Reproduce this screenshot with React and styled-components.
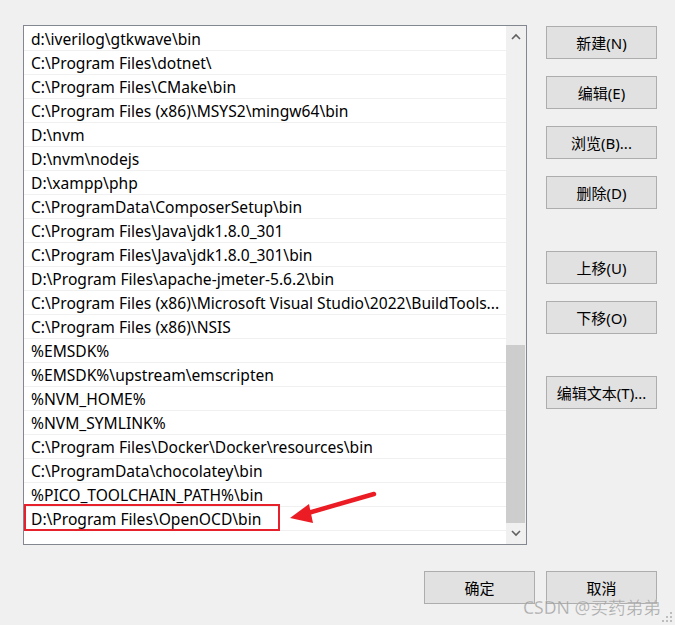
import React from "react";
import styled, { createGlobalStyle } from "styled-components";

const GlobalStyle = createGlobalStyle`
  html, body { margin: 0; padding: 0; background: #f0f0f0; }
  body { font-family: "Noto Sans", "Noto Sans CJK SC", sans-serif; color: #000; }
`;

const Window = styled.div`
  position: relative;
  width: 675px;
  height: 625px;
  box-sizing: border-box;
  padding: 25px 18px 0 23px;
  background: #f0f0f0;
  overflow: hidden;
`;

const Top = styled.div`
  display: flex;
  gap: 19px;
  align-items: flex-start;
`;

const ListBox = styled.div`
  width: 504px;
  height: 520px;
  box-sizing: border-box;
  border: 1px solid #828790;
  background: #fff;
  display: flex;
`;

const Rows = styled.div`
  flex: 1;
  padding-top: 1px;
  min-width: 0;
`;

const Row = styled.div`
  height: 24px;
  box-sizing: border-box;
  border-bottom: 1px solid #f0f0f0;
  padding-left: 7px;
  font-family: "Noto Sans", "Noto Sans CJK SC", sans-serif;
  font-size: 15.6px;
  line-height: 24px;
  white-space: nowrap;
  overflow: hidden;
`;

const ScrollBar = styled.div`
  width: 20px;
  background: #f0f0f0;
  display: flex;
  flex-direction: column;
`;

const ArrowBox = styled.div`
  height: 21px;
  display: flex;
  align-items: center;
  justify-content: center;
`;

const Track = styled.div`
  flex: 1;
  display: flex;
  flex-direction: column;
  justify-content: flex-end;
`;

const Thumb = styled.div`
  height: 178px;
  margin-right: 1px;
  background: #cdcdcd;
`;

const ButtonCol = styled.div`
  display: flex;
  flex-direction: column;
  width: 111px;
  padding-top: 1px;
`;

const Btn = styled.div`
  width: 111px;
  height: 33px;
  box-sizing: border-box;
  border: 1px solid #adadad;
  background: #e1e1e1;
  display: flex;
  align-items: center;
  justify-content: center;
  font-family: "Noto Sans", "Noto Sans CJK SC", sans-serif;
  font-size: 15px;
  margin-top: ${(p) => p.$gap || 0}px;
`;

const Bottom = styled.div`
  display: flex;
  justify-content: flex-end;
  gap: 11px;
  margin-top: 26px;
`;

const Highlight = styled.div`
  position: absolute;
  left: 24px;
  top: 504px;
  width: 256px;
  height: 27px;
  box-sizing: border-box;
  border: 2px solid #e6212b;
`;

const ArrowSvg = styled.svg`
  position: absolute;
  left: 280px;
  top: 480px;
`;

const Watermark = styled.div`
  position: absolute;
  left: 523px;
  top: 594px;
  font-family: "Noto Sans", "Noto Sans CJK SC", sans-serif;
  font-size: 17.6px;
  color: rgba(140, 140, 140, 0.7);
  -webkit-text-stroke: 0.3px rgba(255,255,255,0.6);
  white-space: nowrap;
`;

const Grip = styled.svg`
  position: absolute;
  right: 2px;
  bottom: 2px;
`;

const paths = [
  "d:\\iverilog\\gtkwave\\bin",
  "C:\\Program Files\\dotnet\\",
  "C:\\Program Files\\CMake\\bin",
  "C:\\Program Files (x86)\\MSYS2\\mingw64\\bin",
  "D:\\nvm",
  "D:\\nvm\\nodejs",
  "D:\\xampp\\php",
  "C:\\ProgramData\\ComposerSetup\\bin",
  "C:\\Program Files\\Java\\jdk1.8.0_301",
  "C:\\Program Files\\Java\\jdk1.8.0_301\\bin",
  "D:\\Program Files\\apache-jmeter-5.6.2\\bin",
  "C:\\Program Files (x86)\\Microsoft Visual Studio\\2022\\BuildTools...",
  "C:\\Program Files (x86)\\NSIS",
  "%EMSDK%",
  "%EMSDK%\\upstream\\emscripten",
  "%NVM_HOME%",
  "%NVM_SYMLINK%",
  "C:\\Program Files\\Docker\\Docker\\resources\\bin",
  "C:\\ProgramData\\chocolatey\\bin",
  "%PICO_TOOLCHAIN_PATH%\\bin",
  "D:\\Program Files\\OpenOCD\\bin",
];

const sideButtons = [
  { label: "新建(N)", gap: 0 },
  { label: "编辑(E)", gap: 17 },
  { label: "浏览(B)...", gap: 17 },
  { label: "删除(D)", gap: 17 },
  { label: "上移(U)", gap: 42 },
  { label: "下移(O)", gap: 17 },
  { label: "编辑文本(T)...", gap: 42 },
];

const Chevron = ({ up }) => (
  <svg width="10" height="7" viewBox="0 0 10 7">
    <polyline
      points={up ? "1,6 5,2 9,6" : "1,1 5,5 9,1"}
      fill="none"
      stroke="#606060"
      strokeWidth="1.6"
    />
  </svg>
);

export default function App() {
  return (
    <>
      <GlobalStyle />
      <Window>
        <Top>
          <ListBox>
            <Rows>
              {paths.map((p, i) => (
                <Row key={i}>{p}</Row>
              ))}
            </Rows>
            <ScrollBar>
              <ArrowBox>
                <Chevron up />
              </ArrowBox>
              <Track>
                <Thumb />
              </Track>
              <ArrowBox>
                <Chevron />
              </ArrowBox>
            </ScrollBar>
          </ListBox>
          <ButtonCol>
            {sideButtons.map((b) => (
              <Btn key={b.label} $gap={b.gap}>
                {b.label}
              </Btn>
            ))}
          </ButtonCol>
        </Top>
        <Bottom>
          <Btn>确定</Btn>
          <Btn>取消</Btn>
        </Bottom>
        <Highlight />
        <ArrowSvg width="110" height="50" viewBox="0 0 110 50">
          <line x1="94" y1="14" x2="28" y2="33" stroke="#ec1c24" strokeWidth="4.5" strokeLinecap="round" />
          <polygon points="10,38 29,24 33,43" fill="#ec1c24" />
        </ArrowSvg>
        <Watermark>CSDN @买药弟弟</Watermark>
        <Grip width="12" height="12" viewBox="0 0 12 12">
          {[
            [9, 1], [9, 5], [5, 5], [9, 9], [5, 9], [1, 9],
          ].map(([x, y], i) => (
            <rect key={i} x={x} y={y} width="2" height="2" fill="#bdbdbd" />
          ))}
        </Grip>
      </Window>
    </>
  );
}
